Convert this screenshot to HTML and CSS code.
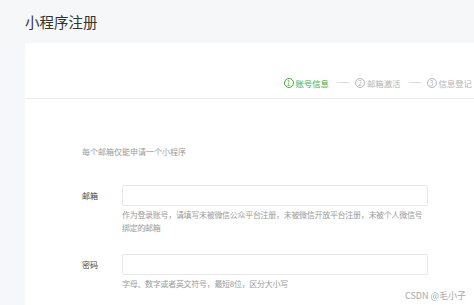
FILE: index.html
```html
<!DOCTYPE html>
<html lang="zh-CN">
  <head>
    <meta charset="UTF-8" />
    <title>小程序注册</title>
    <link rel="stylesheet" href="styles.css">
  </head>
  <body>
    <header class="pageHead">
      <h1>小程序注册</h1>
    </header>

    <main class="card">
      <div class="steps">
        <div class="step active">
          <span class="num">1</span>
          <span>账号信息</span>
        </div>
        <span class="stepLine"></span>
        <div class="step">
          <span class="num">2</span>
          <span>邮箱激活</span>
        </div>
        <span class="stepLine"></span>
        <div class="step">
          <span class="num">3</span>
          <span>信息登记</span>
        </div>
      </div>

      <div class="formBody">
        <p class="intro">每个邮箱仅能申请一个小程序</p>

        <div class="formRow">
          <label for="email">邮箱</label>
          <div class="field">
            <input id="email" type="text" />
            <p class="hint">作为登录账号，请填写未被微信公众平台注册，未被微信开放平台注册，未被个人微信号<br>绑定的邮箱</p>
          </div>
        </div>

        <div class="formRow">
          <label for="pwd">密码</label>
          <div class="field">
            <input id="pwd" type="password" />
            <p class="hint">字母、数字或者英文符号，最短8位，区分大小写</p>
          </div>
        </div>
      </div>
    </main>

    <div class="watermark">CSDN @毛小子</div>
  </body>
</html>
```

FILE: styles.css
```css
:root {
  --page-bg: #f6f7f9;
  --text-color: #353535;
  --muted: #9a9a9a;
  --green: #3fae3c;
  --line: #ececec;
}

* {
  margin: 0;
  padding: 0;
  box-sizing: border-box;
  font-family: "Noto Sans CJK SC", "Noto Sans", sans-serif;
}

body {
  background-color: var(--page-bg);
  color: var(--text-color);
  height: 305px;
  overflow: hidden;
  position: relative;
}

.pageHead {
  height: 43px;
  padding-left: 25px;
  display: flex;
  align-items: center;
}

.pageHead h1 {
  font-size: 14.5px;
  font-weight: 400;
  color: #333;
}

.card {
  margin-left: 25px;
  background: #fff;
  height: 262px;
}

.steps {
  height: 56px;
  display: flex;
  justify-content: flex-end;
  align-items: flex-end;
  padding: 0 2px 10px 0;
  border-bottom: 1px solid var(--line);
  color: #b4b4b4;
  font-size: 8.4px;
}

.step {
  display: flex;
  align-items: center;
  gap: 2px;
  line-height: 10px;
  white-space: nowrap;
}

.step .num {
  width: 10px;
  height: 10px;
  border: 1px solid currentColor;
  border-radius: 50%;
  font-size: 7px;
  line-height: 8px;
  text-align: center;
}

.step.active {
  color: var(--green);
}

.stepLine {
  width: 12px;
  height: 1px;
  background: #dcdcdc;
  margin: 0 6px 5px 8px;
}

.formBody {
  padding: 47px 0 0 57px;
  font-size: 8px;
}

.intro {
  color: var(--muted);
  line-height: 12px;
  margin-bottom: 27px;
}

.formRow {
  display: flex;
  margin-bottom: 20px;
}

.formRow label {
  width: 40px;
  line-height: 21px;
  color: #444;
}

.field {
  width: 306px;
}

.field input {
  display: block;
  width: 306px;
  height: 21px;
  border: 1px solid #e7e7e7;
  border-radius: 2px;
  outline: none;
}

.hint {
  margin-top: 2px;
  line-height: 13px;
  color: var(--muted);
  white-space: nowrap;
  letter-spacing: -0.3px;
}

.watermark {
  position: absolute;
  right: 8px;
  bottom: 3px;
  font-size: 9px;
  color: #a8a8a8;
}
```
